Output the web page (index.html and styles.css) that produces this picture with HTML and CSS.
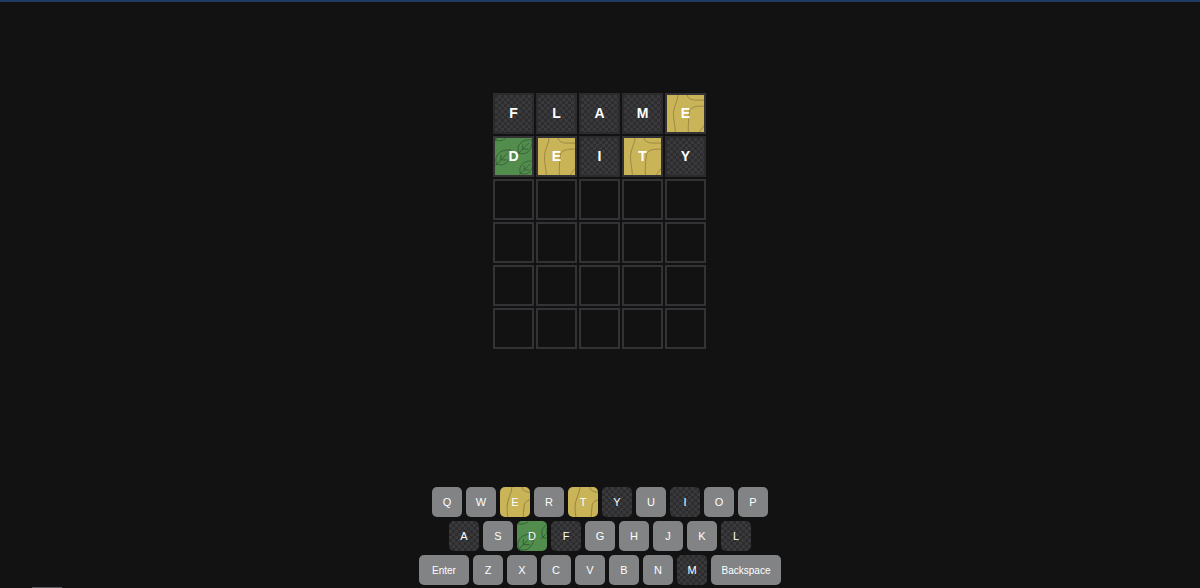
FILE: index.html
```html
<!DOCTYPE html>
<html lang="en">
<head>
    <meta charset="UTF-8">
    <meta name="viewport" content="width=device-width, initial-scale=1.0">
    <title>Wordle</title>
    <link rel="stylesheet" href="styles.css">
</head>
<body>
    <!-- Shared textures for correct and present letters -->
    <svg class="defs" aria-hidden="true">
        <symbol id="leaf" viewBox="0 0 20 20">
            <path d="M2 18C-2 7 7 0 19 1C20 13 12 22 2 18Z"/>
            <path d="M0 20L15 5M7 13V7M7 13H14"/>
        </symbol>
        <symbol id="leaves" viewBox="0 0 40 40">
            <use href="#leaf" x="-1" y="-13" width="17" height="17"/>
            <use href="#leaf" x="24" y="1" width="17" height="17"/>
            <use href="#leaf" x="0" y="12" width="18" height="18"/>
            <use href="#leaf" x="26" y="24" width="16" height="16"/>
        </symbol>
        <symbol id="grain" viewBox="0 0 40 40">
            <path d="M12 0C12 6 7 12 7 20C7 28 9 34 9 40"/>
            <path d="M22 0C22 3 25 5 30 5.500H40"/>
            <path d="M40 12C33 12 24 12 24 20C23 28 23 34 23 40"/>
            <path d="M40 33C38 36 36 38 35 40"/>
        </symbol>
    </svg>

    <div class="top-line"></div>

    <main class="game">
        <!-- Board -->
        <section class="board">
            <div class="tile absent">F</div>
            <div class="tile absent">L</div>
            <div class="tile absent">A</div>
            <div class="tile absent">M</div>
            <div class="tile present"><svg class="grain"><use href="#grain"/></svg><span>E</span></div>

            <div class="tile correct"><svg class="leaves"><use href="#leaves"/></svg><span>D</span></div>
            <div class="tile present"><svg class="grain"><use href="#grain"/></svg><span>E</span></div>
            <div class="tile absent">I</div>
            <div class="tile present"><svg class="grain"><use href="#grain"/></svg><span>T</span></div>
            <div class="tile absent">Y</div>

            <div class="tile"></div><div class="tile"></div><div class="tile"></div><div class="tile"></div><div class="tile"></div>
            <div class="tile"></div><div class="tile"></div><div class="tile"></div><div class="tile"></div><div class="tile"></div>
            <div class="tile"></div><div class="tile"></div><div class="tile"></div><div class="tile"></div><div class="tile"></div>
            <div class="tile"></div><div class="tile"></div><div class="tile"></div><div class="tile"></div><div class="tile"></div>
        </section>

        <!-- Keyboard -->
        <section class="keyboard">
            <div class="key-row">
                <button class="key">Q</button>
                <button class="key">W</button>
                <button class="key present"><svg class="grain"><use href="#grain"/></svg><span>E</span></button>
                <button class="key">R</button>
                <button class="key present"><svg class="grain"><use href="#grain"/></svg><span>T</span></button>
                <button class="key absent">Y</button>
                <button class="key">U</button>
                <button class="key absent">I</button>
                <button class="key">O</button>
                <button class="key">P</button>
            </div>
            <div class="key-row">
                <button class="key absent">A</button>
                <button class="key">S</button>
                <button class="key correct"><svg class="leaves"><use href="#leaves"/></svg><span>D</span></button>
                <button class="key absent">F</button>
                <button class="key">G</button>
                <button class="key">H</button>
                <button class="key">J</button>
                <button class="key">K</button>
                <button class="key absent">L</button>
            </div>
            <div class="key-row">
                <button class="key wide">Enter</button>
                <button class="key">Z</button>
                <button class="key">X</button>
                <button class="key">C</button>
                <button class="key">V</button>
                <button class="key">B</button>
                <button class="key">N</button>
                <button class="key absent">M</button>
                <button class="key wider">Backspace</button>
            </div>
        </section>
    </main>

    <div class="bottom-tab"></div>
</body>
</html>
```

FILE: styles.css
```css
* {
    box-sizing: border-box;
}
html, body {
    height: 100%;
}
body {
    display: flex;
    flex-direction: column;
    margin: 0;
    overflow: hidden;
    background-color: #121213;
    color: #fff;
    font-family: "Liberation Sans", Arial, sans-serif;
}
.defs {
    display: none;
}
.top-line {
    flex: none;
    height: 2px;
    background-color: #1f3a63;
}
.game {
    flex: 1;
    display: flex;
    flex-direction: column;
    align-items: center;
    justify-content: space-between;
    padding: 91px 1px 3px 0;
}
.board {
    display: grid;
    grid-template-columns: repeat(5, 41px);
    grid-auto-rows: 41px;
    gap: 2px;
}
.tile {
    position: relative;
    display: flex;
    align-items: center;
    justify-content: center;
    overflow: hidden;
    border: 2px solid #333335;
    padding-bottom: 1px;
    font-size: 14px;
    font-weight: bold;
}
.tile span, .key span {
    position: relative;
}
.absent {
    background-color: #333335;
    background-image: conic-gradient(#3a3a3c 25%, #2d2d2f 0 50%, #3a3a3c 0 75%, #2d2d2f 0);
    background-size: 6px 6px;
}
.tile.absent {
    border-color: #2b2b2d;
}
.correct {
    background-color: #538d4e;
}
.present {
    background-color: #c9b458;
}
.grain, .leaves {
    position: absolute;
    top: 0;
    left: 0;
    width: 100%;
    height: 100%;
    fill: none;
    stroke-width: 1;
}
.grain {
    stroke: #978644;
}
.leaves {
    stroke: #2f5a33;
}
.keyboard {
    display: flex;
    flex-direction: column;
    gap: 4px;
    margin-right: -1px;
}
.key-row {
    display: flex;
    justify-content: center;
    gap: 4px;
}
.key {
    position: relative;
    overflow: hidden;
    width: 30px;
    height: 30px;
    padding: 0;
    border: none;
    border-radius: 5px;
    background-color: #818384;
    color: #fff;
    font-family: inherit;
    font-size: 11px;
}
.key.absent {
    background-color: #333335;
}
.key.correct {
    background-color: #538d4e;
}
.key.present {
    background-color: #c9b458;
}
/* texture keeps the tile's scale, the key only shows part of it */
.key .grain, .key .leaves {
    width: 40px;
    height: 40px;
}
.key.wide {
    width: 50px;
    font-size: 10px;
}
.key.wider {
    width: 70px;
    font-size: 10px;
}
.bottom-tab {
    position: absolute;
    bottom: 0;
    left: 32px;
    width: 30px;
    height: 1px;
    background-color: #5a5a5c;
}
```
